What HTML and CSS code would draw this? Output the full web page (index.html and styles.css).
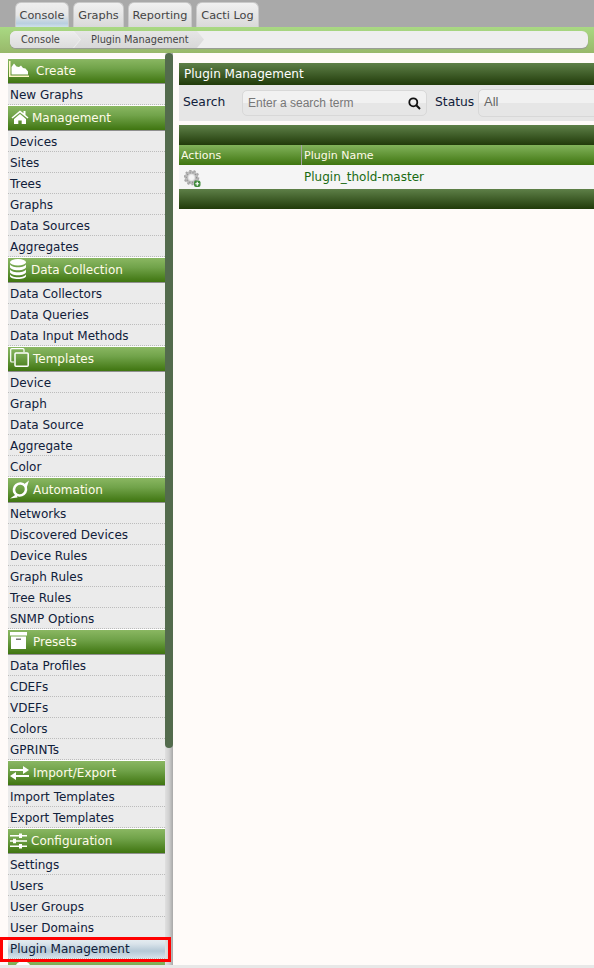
FILE: index.html
```html
<!DOCTYPE html>
<html lang="en">
<head>
<meta charset="utf-8">
<title>Plugin Management</title>
<link rel="stylesheet" href="styles.css">
</head>
<body>
<div class="page">
  <nav class="tabs">
    <a class="tab tab-active">Console</a>
    <a class="tab">Graphs</a>
    <a class="tab">Reporting</a>
    <a class="tab">Cacti Log</a>
  </nav>
  <div class="crumbband">
    <div class="crumbbar">
      <a class="crumb crumb-first">Console</a>
      <a class="crumb crumb-second">Plugin Management</a>
    </div>
  </div>
  <div class="columns">
    <aside class="sidebar">
      <div class="menu">
        <div class="head"><svg class="ico ico-create" viewBox="0 0 20 16"><path d="M0 0h1.500v14.500H20V16H0z" fill="#fff8c8"/><path d="M2.500 13.500V6l2.500-3.500 2.500 3 2.500.5 2-1.500 2 2.500 2.500.5 2.500 3v3z" fill="#fff"/></svg><span class="hl hl-create">Create</span></div>
        <a class="item">New Graphs</a>
        <div class="head"><svg class="ico ico-home" viewBox="0 0 18 14"><path d="M9 0.500 0.500 7.500l1 1L9 2.500l7.500 6 1-1L14.500 5V1h-2v2.300z" fill="#fff"/><path d="M3 9 9 4l6 5v5h-4.300v-3.500H7.300V14H3z" fill="#fff"/></svg><span class="hl hl-manage">Management</span></div>
        <a class="item">Devices</a>
        <a class="item">Sites</a>
        <a class="item">Trees</a>
        <a class="item">Graphs</a>
        <a class="item">Data Sources</a>
        <a class="item">Aggregates</a>
        <div class="head"><svg class="ico ico-db" viewBox="0 0 16 20"><ellipse cx="8" cy="3.200" rx="8" ry="3.200" fill="#fff"/><path d="M0 5v3c0 1.800 3.600 3.200 8 3.200S16 9.800 16 8V5c0 1.800-3.600 3.200-8 3.200S0 6.800 0 5zM0 10v3c0 1.800 3.600 3.200 8 3.200S16 14.800 16 13v-3c0 1.800-3.600 3.200-8 3.200S0 11.800 0 10zM0 15v2c0 1.800 3.600 3 8 3s8-1.200 8-3v-2c0 1.800-3.600 3.200-8 3.200S0 16.800 0 15z" fill="#fff"/></svg><span class="hl hl-data">Data Collection</span></div>
        <a class="item">Data Collectors</a>
        <a class="item">Data Queries</a>
        <a class="item">Data Input Methods</a>
        <div class="head"><svg class="ico ico-copy" viewBox="0 0 19 19"><path d="M4 14H1.700A1 1 0 0 1 .7 13V1.700a1 1 0 0 1 1-1H13a1 1 0 0 1 1 1V4" fill="none" stroke="#fff" stroke-width="1.200"/><rect x="5" y="5" width="13.200" height="13.200" rx="1" fill="none" stroke="#fff" stroke-width="1.500"/></svg><span class="hl hl-templ">Templates</span></div>
        <a class="item">Device</a>
        <a class="item">Graph</a>
        <a class="item">Data Source</a>
        <a class="item">Aggregate</a>
        <a class="item">Color</a>
        <div class="head"><svg class="ico ico-auto" viewBox="0 0 19 19"><ellipse cx="10" cy="9.500" rx="6.200" ry="5.800" transform="rotate(-40 10 9.500)" fill="none" stroke="#fff" stroke-width="2.600"/><path d="M13 5 19 .5 16.500 8zM6.500 14 0 18.500 7.500 17.500z" fill="#fff"/></svg><span class="hl hl-templ">Automation</span></div>
        <a class="item">Networks</a>
        <a class="item">Discovered Devices</a>
        <a class="item">Device Rules</a>
        <a class="item">Graph Rules</a>
        <a class="item">Tree Rules</a>
        <a class="item">SNMP Options</a>
        <div class="head"><svg class="ico ico-box" viewBox="0 0 17 17"><path d="M0 0h17v3.500H0z" fill="#fff"/><path d="M1 4.500h15V17H1z" fill="#fff"/><path d="M6 6.500h5V8H6z" fill="#777"/></svg><span class="hl hl-templ">Presets</span></div>
        <a class="item">Data Profiles</a>
        <a class="item">CDEFs</a>
        <a class="item">VDEFs</a>
        <a class="item">Colors</a>
        <a class="item">GPRINTs</a>
        <div class="head"><svg class="ico ico-swap" viewBox="0 0 19 14"><path d="M0 3h13V0l6 4-6 4V5H0z" fill="#fff"/><path d="M19 9H6V6L0 10l6 4v-3h13z" fill="#fff"/></svg><span class="hl hl-templ">Import/Export</span></div>
        <a class="item">Import Templates</a>
        <a class="item">Export Templates</a>
        <div class="head"><svg class="ico ico-sliders" viewBox="0 0 17 16"><path d="M0 2h9V.5h3V2h5v1.500h-5V5H9V3.500H0zM0 7.200h3V5.700h3v1.500h11v1.500H6v1.500H3V8.700H0zM0 12.500h9V11h3v1.500h5V14h-5v1.500H9V14H0z" fill="#fff"/></svg><span class="hl hl-data">Configuration</span></div>
        <a class="item">Settings</a>
        <a class="item">Users</a>
        <a class="item">User Groups</a>
        <a class="item">User Domains</a>
        <a class="item item-active">Plugin Management</a>
        <div class="head"><svg class="ico ico-cut" viewBox="0 0 16 16"><circle cx="8" cy="8" r="8" fill="#fff"/></svg></div>
      </div>
      <div class="scrolltrack"><div class="scrollthumb"></div></div>
      <div class="redbox"></div>
    </aside>
    <main class="main">
      <div class="titlebar">Plugin Management</div>
      <form class="filter">
        <label class="flabel">Search</label>
        <div class="search">
          <span class="placeholder">Enter a search term</span>
          <svg class="lens" viewBox="0 0 13 13"><circle cx="5.300" cy="5.300" r="4" fill="none" stroke="#111" stroke-width="1.800"/><path d="M8.300 8.300 12 12" stroke="#111" stroke-width="2"/></svg>
        </div>
        <label class="flabel flabel-status">Status</label>
        <div class="select">All</div>
      </form>
      <div class="darkbar darkbar-top"></div>
      <div class="thead">
        <div class="th th-actions">Actions</div>
        <div class="th th-name">Plugin Name</div>
      </div>
      <div class="row">
        <div class="cell-actions">
          <svg class="gear" viewBox="0 0 17 17">
            <circle cx="7.500" cy="7.500" r="5" fill="none" stroke="#bcbcbc" stroke-width="3.600"/>
            <circle cx="7.500" cy="7.500" r="6.900" fill="none" stroke="#a8a8a8" stroke-width="1.800" stroke-dasharray="2.200 2.100"/>
            <circle cx="7.500" cy="7.500" r="5" fill="none" stroke="#8f8f8f" stroke-width="1.200" stroke-dasharray="1 2"/>
            <circle cx="7.500" cy="7.500" r="3.200" fill="none" stroke="#e2e2e2" stroke-width="1"/>
            <rect x="10" y="10.500" width="6.500" height="6.500" rx="2" fill="#3f8a3a"/>
            <path d="M13.250 11.800v3.900M11.300 13.750h3.900" stroke="#fff" stroke-width="1.200"/>
          </svg>
        </div>
        <a class="cell-name">Plugin_thold-master</a>
      </div>
      <div class="darkbar darkbar-bottom"></div>
    </main>
  </div>
  <div class="footline"></div>
</div>
</body>
</html>
```
FILE: styles.css
```css
* { box-sizing: border-box; }
html, body { margin: 0; padding: 0; height: 100%; overflow: hidden; }
body { background: #fffbf9; font-family: "DejaVu Sans", Verdana, sans-serif; font-size: 12px; color: #10203a; }
.page { width: 594px; height: 968px; display: flex; flex-direction: column; overflow: hidden; }

.tabs { height: 27px; flex: none; background: #a9a9a9; display: flex; gap: 4px; padding: 2px 0 0 15px; }
.tab { height: 25px; border: 1px solid #c9c9c9; border-bottom: 0; border-radius: 6px 6px 0 0; background: linear-gradient(#f1f1f1, #d9d9d9); color: #444; font-size: 11.300px; line-height: 26px; text-align: center; width: 51px; }
.tab:nth-child(1) { width: 54px; background: linear-gradient(#efefef 0, #e6e6e6 50%, #b9cfe0 85%, #cfe0ea 100%); }
.tab:nth-child(3) { width: 64px; }
.tab:nth-child(4) { width: 63px; }

.crumbband { height: 26px; flex: none; background: linear-gradient(#a9d983, #98b86a); padding: 4px 6px 5px 10px; }
.crumbbar { height: 17px; background: #eeeeee; border-radius: 6px; box-shadow: 0 1px 1px #999; display: flex; overflow: hidden; }
.crumb { font-size: 9.800px; color: #444; line-height: 17px; height: 17px; display: block; }
.crumb-first { width: 70px; padding-left: 11px; background: linear-gradient(#eeeeee, #dcdcdc); clip-path: polygon(0 0, 63px 0, 70px 50%, 63px 100%, 0 100%); }
.crumb-second { width: 130px; margin-left: -6px; padding-left: 17px; background: linear-gradient(#e6e6e6, #d8d8d8); clip-path: polygon(0 0, 123px 0, 130px 50%, 123px 100%, 0 100%, 7px 50%); }

.columns { flex: 1; display: flex; min-height: 0; }
.sidebar { width: 179px; flex: none; position: relative; padding: 0 0 0 8px; display: flex; overflow: hidden; }
.menu { width: 157px; flex: none; padding-top: 5px; height: 912px; overflow: hidden; }
.head { height: 26px; padding-top: 1px; background: linear-gradient(#fff 0, #fff 1px, #8ab762 1px, #71a34a 40%, #3f7510 96%, #8f8f8f 96%); color: #fff; font-size: 12px; position: relative; }
.hl { position: absolute; top: 6px; line-height: 14px; color: #fffbe8; }
.hl-create { left: 28px; }
.hl-manage { left: 24px; }
.hl-data { left: 23px; }
.hl-templ { left: 25px; }
.ico { position: absolute; display: block; }
.ico-create { left: 1px; top: 3px; width: 20px; height: 16px; }
.ico-home { left: 3px; top: 5px; width: 18px; height: 14px; }
.ico-db { left: 2px; top: 2px; width: 16px; height: 20px; }
.ico-copy { left: 2px; top: 2px; width: 19px; height: 19px; }
.ico-auto { left: 2px; top: 3px; width: 19px; height: 19px; }
.ico-box { left: 2px; top: 3px; width: 17px; height: 17px; }
.ico-swap { left: 2px; top: 6px; width: 19px; height: 14px; }
.ico-sliders { left: 2px; top: 5px; width: 17px; height: 16px; }
.ico-cut { left: 7px; top: 2px; width: 16px; height: 16px; }
.item { display: block; height: 21px; background: #ebebeb; border-bottom: 1px dotted #bcbcbc; padding-left: 2px; line-height: 22px; font-size: 12px; color: #10203a; }
.item-active { background: linear-gradient(#eaf0f4 0, #d9e3ea 30%, #b4c8d6 65%, #d5e2ea 100%); }

.scrolltrack { width: 8px; flex: none; height: 912px; background: linear-gradient(90deg, #e0e0e0, #d0d0d0 50%, #a8a8a8); }
.scrollthumb { height: 695px; background: #536b4d; border-radius: 4px; }
.redbox { position: absolute; left: 0; top: 884px; width: 171px; height: 25px; border: 3.500px solid #f00; }

.main { flex: 1; min-width: 0; padding-top: 10px; overflow: hidden; }
.titlebar { height: 22px; background: linear-gradient(#5e8048, #213b0a); color: #fff; font-size: 12px; line-height: 23px; padding-left: 5px; }
.filter { width: 600px; height: 36px; background: #e6e6e6; display: flex; align-items: center; padding-left: 4px; }
.flabel { font-size: 12.300px; color: #10203a; width: 59px; flex: none; padding-bottom: 2px; }
.flabel-status { width: 43px; margin-left: 8px; }
.search { width: 185px; height: 26px; flex: none; border: 1px solid #d8d8d8; border-radius: 5px; background: linear-gradient(#f1f1f1 50%, #e6e6e6 50%); display: flex; align-items: center; justify-content: space-between; padding: 0 5px; }
.placeholder { font-family: "Liberation Sans", Arial, sans-serif; font-size: 12px; color: #777; }
.lens { width: 13px; height: 13px; display: block; }
.select { width: 130px; height: 28px; flex: none; border: 1px solid #d8d8d8; border-radius: 5px 0 0 5px; background: linear-gradient(#f1f1f1 50%, #e6e6e6 50%); font-family: "Liberation Sans", Arial, sans-serif; font-size: 13px; color: #666; line-height: 24px; padding-left: 5px; }
.darkbar { height: 20px; background: linear-gradient(#5e8048, #213b0a); }
.darkbar-top { margin-top: 4px; }
.thead { height: 20px; display: flex; background: linear-gradient(#82b35b, #3f7510); color: #fffbe8; font-size: 11px; line-height: 22px; }
.th-actions { width: 123px; padding-left: 2px; border-right: 1px solid #a6a6a6; }
.th-name { padding-left: 2px; }
.row { height: 24px; background: #f5f5f5; display: flex; }
.cell-actions { width: 125px; padding: 5px 0 0 5px; }
.gear { width: 17px; height: 17px; display: block; }
.cell-name { font-size: 12px; color: #1a6b12; line-height: 24px; }
.footline { height: 3px; flex: none; background: #e8e8e8; }
```
